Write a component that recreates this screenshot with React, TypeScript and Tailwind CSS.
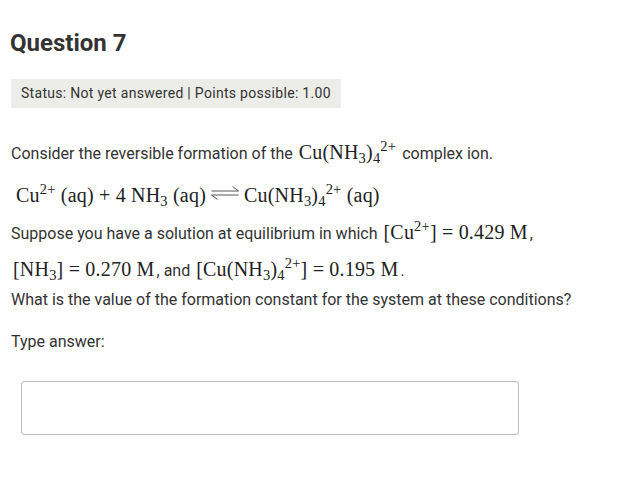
import React from "react"

const serif = "font-['Liberation_Serif','Times_New_Roman',serif]"

function M({ children }: { children: React.ReactNode }) {
  return <span className={`${serif} text-[20px] tracking-[0.2px] text-[#222] mx-[2px]`}>{children}</span>
}

function Sub({ children }: { children: React.ReactNode }) {
  return <span className="relative top-[4px] text-[14.5px] leading-none">{children}</span>
}

function Sup({ children }: { children: React.ReactNode }) {
  return <span className="relative -top-[8px] text-[14.5px] leading-none">{children}</span>
}

function CuComplex() {
  return (
    <>
      Cu(NH<Sub>3</Sub>)<Sub>4</Sub>
      <Sup>2+</Sup>
    </>
  )
}

function EqArrow() {
  return (
    <svg width="30" height="16" viewBox="0 0 30 16" className="inline-block mx-[4px] align-[1px]">
      <path d="M1.5 6 H28.5 L22.5 1.5" fill="none" stroke="#444" strokeWidth="0.9" />
      <path d="M28.5 10 H1.5 L7.5 14.5" fill="none" stroke="#444" strokeWidth="0.9" />
    </svg>
  )
}

export default function App() {
  return (
    <div className="w-[628px] h-[501px] bg-white font-['Roboto','Liberation_Sans',sans-serif] text-[#333]">
      <div className="px-[11px] pt-[28px]">
        <h1 className="text-[24px] font-bold text-[#333] leading-[30px] -ml-[1px]">Question 7</h1>

        <div className="mt-[21px] inline-block bg-[#ecede9] px-[10px] py-[5px] text-[14px] tracking-[0.3px] leading-[19px] text-[#333]">
          Status: Not yet answered | Points possible: 1.00
        </div>

        <p className="mt-[32px] text-[16px] leading-[24px]">
          Consider the reversible formation of the{" "}
          <M>
            <CuComplex />
          </M>{" "}
          complex ion.
        </p>

        <p className="mt-[16px] text-[16px] leading-[26px] pl-[3px]">
          <M>
            Cu<Sup>2+</Sup> (aq) + 4 NH<Sub>3</Sub> (aq)
            <EqArrow />
            <CuComplex /> (aq)
          </M>
        </p>

        <div className="mt-[7px] text-[16px]">
          <p className="leading-[30px]">
            Suppose you have a solution at equilibrium in which{" "}
            <M>
              [Cu<Sup>2+</Sup>] = 0.429 M
            </M>
            ,
          </p>
          <p className="mt-[5px] leading-[30px]">
            <M>[NH<Sub>3</Sub>] = 0.270 M</M>, and{" "}
            <M>
              [<CuComplex />] = 0.195 M
            </M>
            .
          </p>
        </div>

        <p className="mt-[2px] text-[16px] leading-[24px]">
          What is the value of the formation constant for the system at these conditions?
        </p>

        <p className="mt-[18px] text-[16px] leading-[24px]">Type answer:</p>

        <div className="mt-[27px] ml-[10px] w-[498px] h-[54px] border border-[#bdbdbd] rounded-[3px] bg-white" />
      </div>
    </div>
  )
}
